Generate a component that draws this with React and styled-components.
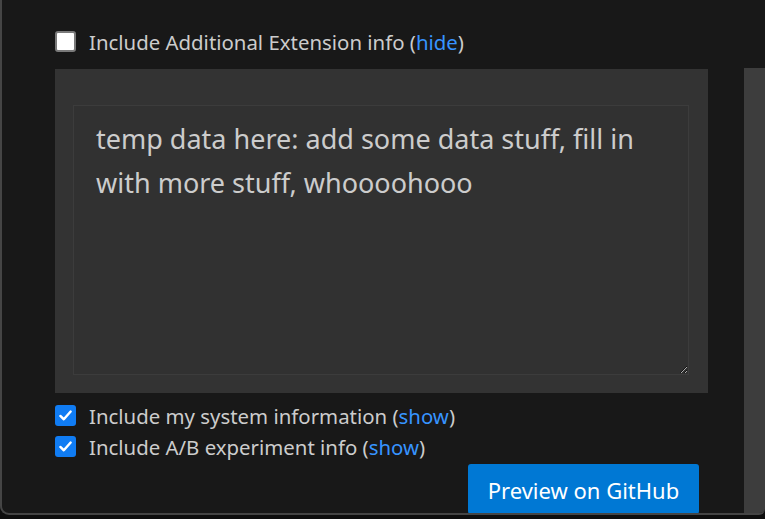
import React from "react";
import styled, { createGlobalStyle } from "styled-components";

const Global = createGlobalStyle`
  html, body { margin: 0; padding: 0; background: #0e0e0e; }
  body { font-family: "Noto Sans", "Open Sans", sans-serif; }
  * { box-sizing: border-box; }
`;

const Window = styled.div`
  width: 765px;
  height: 515px;
  background: #181818;
  border-left: 2px solid #454545;
  border-bottom: 2px solid #454545;
  border-bottom-left-radius: 9px;
  border-bottom-right-radius: 6px;
  overflow: hidden;
  display: flex;
`;

const Main = styled.div`
  width: 706px;
  padding: 31px 0 0 53px;
  display: flex;
  flex-direction: column;
`;

const Strip = styled.div`
  margin-top: 68px;
  margin-left: 36px;
  flex: 1;
  background: #3d3d3d;
`;

const Row = styled.label`
  display: flex;
  align-items: center;
  gap: 13px;
  height: 21px;
  flex: none;
  margin-bottom: ${(p) => p.$mb || 0}px;
  font-size: 20.4px;
  color: #cccccc;
  white-space: nowrap;
`;

const Box = styled.span`
  width: 21px;
  height: 21px;
  flex: none;
  border-radius: 3px;
  display: flex;
  align-items: center;
  justify-content: center;
  background: ${(p) => (p.$checked ? "#107cf3" : "#ffffff")};
  border: ${(p) => (p.$checked ? "none" : "2px solid #7a7a7a")};
`;

const Link = styled.a`
  color: #3794ff;
  text-decoration: none;
  cursor: pointer;
`;

const Block = styled.div`
  width: 653px;
  height: 324px;
  flex: none;
  background: #333333;
  padding: 36px 19px 18px 18px;
  margin-bottom: 12px;
`;

const Area = styled.textarea`
  width: 100%;
  height: 100%;
  display: block;
  margin: 0;
  background: #313131;
  border: 1px solid #3c3c3c;
  color: #cccccc;
  font-family: "Noto Sans", "Open Sans", sans-serif;
  font-size: 27px;
  line-height: 44px;
  padding: 11px 22px;
  resize: vertical;
  outline: none;
`;

const Actions = styled.div`
  display: flex;
  justify-content: flex-end;
  padding-right: 9px;
  margin-top: 7px;
`;

const Button = styled.button`
  width: 231px;
  height: 50px;
  flex: none;
  background: #0078d4;
  color: #ffffff;
  border: none;
  border-radius: 3px;
  font-family: "Noto Sans", "Open Sans", sans-serif;
  font-size: 22px;
  padding: 2px 0 0;
  cursor: pointer;
`;

function Check({ checked }) {
  return (
    <Box $checked={checked}>
      {checked && (
        <svg width="15" height="15" viewBox="0 0 16 16">
          <path d="M2.5 8.5 L6.2 12 L13.5 3.8" fill="none" stroke="#fff" strokeWidth="2.6" strokeLinecap="round" strokeLinejoin="round" />
        </svg>
      )}
    </Box>
  );
}

export default function App() {
  return (
    <>
      <Global />
      <Window>
        <Main>
          <Row $mb={17}>
            <Check checked={false} />
            <span>
              Include Additional Extension info (<Link>hide</Link>)
            </span>
          </Row>
          <Block>
            <Area
              defaultValue="temp data here: add some data stuff, fill in with more stuff, whoooohooo"
              spellCheck={false}
            />
          </Block>
          <Row $mb={10}>
            <Check checked />
            <span>
              Include my system information (<Link>show</Link>)
            </span>
          </Row>
          <Row>
            <Check checked />
            <span>
              Include A/B experiment info (<Link>show</Link>)
            </span>
          </Row>
          <Actions>
            <Button>Preview on GitHub</Button>
          </Actions>
        </Main>
        <Strip />
      </Window>
    </>
  );
}
